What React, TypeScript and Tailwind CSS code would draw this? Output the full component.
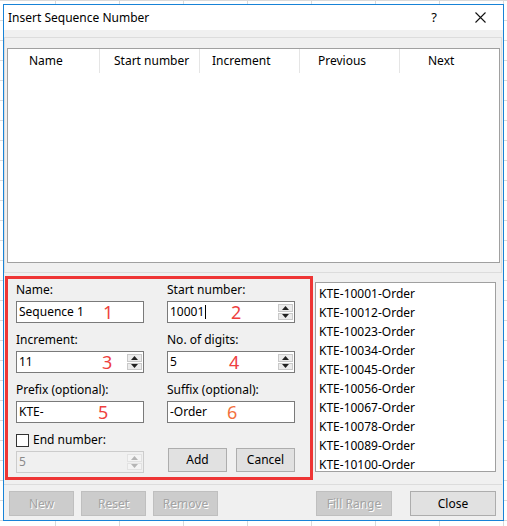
import React from 'react';

const font = { fontFamily: '"Noto Sans", "Open Sans", sans-serif' };

const SpinButtons = ({ disabled }: { disabled?: boolean }) => (
  <div className="absolute right-[1px] top-[1px] bottom-[1px] w-[15px] flex flex-col gap-[1px] py-[1px]">
    {[0, 1].map((i) => (
      <div key={i} className={`flex-1 flex items-center justify-center border ${disabled ? 'border-[#e2e2e2] bg-[#f4f4f4]' : 'border-[#c9c9c9] bg-[#ececec]'}`}>
        <svg width="7" height="4" viewBox="0 0 7 4">
          {i === 0 ? (
            <path d="M0 4 L3.5 0 L7 4 Z" fill={disabled ? '#b5b5b5' : '#222'} />
          ) : (
            <path d="M0 0 L3.5 4 L7 0 Z" fill={disabled ? '#b5b5b5' : '#222'} />
          )}
        </svg>
      </div>
    ))}
  </div>
);

const Field = ({
  label,
  value,
  mark,
  markX,
  markColor = 'text-[#ee3f3f]',
  spin,
  caret,
}: {
  label: string;
  value: string;
  mark: string;
  markX: number;
  markColor?: string;
  spin?: boolean;
  caret?: boolean;
}) => (
  <div className="flex flex-col w-[128px]">
    <div className="h-[22px] flex items-center text-[12px] text-black">{label}</div>
    <div className="relative h-[22px] border border-[#7a7a7a] bg-white flex items-center pl-[2px] text-[12px] text-black">
      <span>{value}</span>
      {caret && <span className="w-[1px] h-[14px] bg-black ml-[1px]" />}
      <span className={`absolute top-[-3px] text-[18px] leading-[26px] ${markColor}`} style={{ left: markX }}>
        {mark}
      </span>
      {spin && <SpinButtons />}
    </div>
  </div>
);

const WinButton = ({ label, w, disabled }: { label: string; w: string; disabled?: boolean }) => (
  <div
    className={`${w} h-[25px] flex items-center justify-center border text-[12px] ${
      disabled
        ? 'bg-[#cccccc] border-[#bfbfbf] text-[#a3a3a3] [text-shadow:1px_1px_0_#ffffff]'
        : 'bg-[#e1e1e1] border-[#adadad] text-black'
    }`}
  >
    {label}
  </div>
);

const items = [
  'KTE-10001-Order',
  'KTE-10012-Order',
  'KTE-10023-Order',
  'KTE-10034-Order',
  'KTE-10045-Order',
  'KTE-10056-Order',
  'KTE-10067-Order',
  'KTE-10078-Order',
  'KTE-10089-Order',
  'KTE-10100-Order',
];

const columns = [
  { name: 'Name', w: 'w-[92px]', pl: 'pl-[21px]' },
  { name: 'Start number', w: 'w-[100px]', pl: 'pl-[14px]' },
  { name: 'Increment', w: 'w-[100px]', pl: 'pl-[12px]' },
  { name: 'Previous', w: 'w-[100px]', pl: 'pl-[18px]' },
  { name: 'Next', w: 'w-[99px]', pl: 'pl-[28px]' },
];

export default function App() {
  return (
    <div
      className="w-[507px] h-[526px] overflow-hidden bg-white bg-[linear-gradient(to_right,#dadada_1px,transparent_1px),linear-gradient(to_bottom,#dadada_1px,transparent_1px)] bg-[size:64px_20px] bg-[position:55px_0px] pt-[4px] pl-[3px]"
      style={font}
    >
      <div className="w-[501px] h-[517px] border border-[#1883d7] bg-[#f0f0f0] flex flex-col">
        {/* title bar */}
        <div className="h-[25px] bg-white flex items-center shrink-0">
          <span className="pl-[4px] text-[12px] text-black">Insert Sequence Number</span>
          <span className="ml-auto mr-[38px] text-[13px] text-black">?</span>
          <svg width="11" height="11" viewBox="0 0 11 11" className="mr-[17px]">
            <path d="M0.5 0.5 L10.5 10.5 M10.5 0.5 L0.5 10.5" stroke="#111" strokeWidth="1.1" />
          </svg>
        </div>

        {/* upper panel */}
        <div className="mt-[7px] mr-[1px] h-[236px] border border-[#dcdcdc] pt-[10px] pl-[2px] pr-[1px]">
          <div className="h-[215px] border border-[#a0a0a0] bg-white">
            <div className="flex h-[24px]">
              {columns.map((c, i) => (
                <div
                  key={c.name}
                  className={`${c.w} ${c.pl} h-full flex items-center text-[12px] text-black ${i < 4 ? 'border-r border-[#e5e5e5]' : ''}`}
                >
                  {c.name}
                </div>
              ))}
            </div>
          </div>
        </div>

        {/* lower section */}
        <div className="flex mt-[3px] h-[208px] pl-[1px]">
          <div className="relative w-[308px] h-[204px] border-[3px] border-[#ee3535] pl-[8px] flex gap-[22px]">
            <div className="flex flex-col gap-[6px]">
              <Field label="Name:" value="Sequence 1" mark="1" markX={86} />
              <Field label="Increment:" value="11" mark="3" markX={85} spin />
              <Field label="Prefix (optional):" value="KTE-" mark="5" markX={81} />
              <div className="flex flex-col w-[128px]">
                <div className="h-[22px] flex items-center gap-[4px] text-[12px] text-black">
                  <span className="w-[13px] h-[13px] border border-[#333] bg-white" />
                  <span>End number:</span>
                </div>
                <div className="relative h-[22px] border border-[#cccccc] bg-[#f0f0f0] flex items-center pl-[2px] text-[12px] text-[#8a8a8a]">
                  5
                  <SpinButtons disabled />
                </div>
              </div>
            </div>
            <div className="flex flex-col gap-[6px] pl-[1px]">
              <Field label="Start number:" value="10001" mark="2" markX={63} spin caret />
              <Field label="No. of digits:" value="5" mark="4" markX={61} spin />
              <Field label="Suffix (optional):" value="-Order" mark="6" markX={59} markColor="text-[#f2713d]" />
              <div className="flex gap-[9px] mt-[19px] pl-[1px]">
                <div className="w-[59px] h-[24px] flex items-center justify-center bg-[#e1e1e1] border border-[#adadad] text-[12px] text-black">Add</div>
                <div className="w-[59px] h-[24px] flex items-center justify-center bg-[#e1e1e1] border border-[#adadad] text-[12px] text-black">Cancel</div>
              </div>
            </div>
          </div>
          <div className="ml-[2px] mt-[6px] w-[181px] h-[190px] border border-[#a0a0a0] bg-white pt-[1px] pl-[3px] overflow-hidden">
            {items.map((it) => (
              <div key={it} className="h-[19px] flex items-center text-[12px] text-black">
                {it}
              </div>
            ))}
          </div>
        </div>

        {/* separator */}
        <div className="border-t border-[#dcdcdc] mr-[1px]" />

        {/* bottom buttons */}
        <div className="flex mt-[6px] pl-[5px]">
          <WinButton label="New" w="w-[65px]" disabled />
          <div className="w-[7px]" />
          <WinButton label="Reset" w="w-[65px]" disabled />
          <div className="w-[7px]" />
          <WinButton label="Remove" w="w-[65px]" disabled />
          <div className="w-[98px]" />
          <WinButton label="Fill Range" w="w-[76px]" disabled />
          <div className="w-[18px]" />
          <WinButton label="Close" w="w-[86px]" />
        </div>
      </div>
    </div>
  );
}
